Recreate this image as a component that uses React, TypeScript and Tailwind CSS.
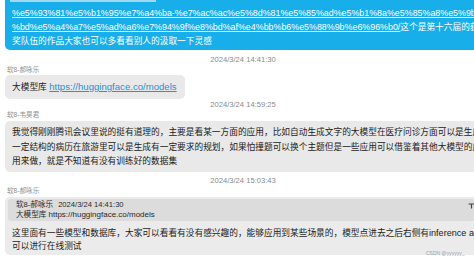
import React from "react";

const font = {
  fontFamily: '"Segoe UI", "Liberation Sans", "Noto Sans CJK SC", sans-serif',
};

function Stamp({ t }: { t: string }) {
  return (
    <div className="flex justify-center pl-[12px] text-[7.6px] leading-[10px] text-[#8a8a8a] whitespace-nowrap">
      {t}
    </div>
  );
}

function Sender({ n }: { n: string }) {
  return (
    <div className="pl-[7px] text-[6.6px] leading-[8px] text-[#8f8f8f] whitespace-nowrap">
      {n}
    </div>
  );
}

export default function App() {
  return (
    <div
      className="w-[474px] h-[260px] overflow-hidden bg-white relative"
      style={font}
    >
      {/* blue bubble */}
      <div className="relative ml-[5px] w-[520px] rounded-b-[5px] bg-[#17aeea] pt-[6px] pb-[2px] pl-[7px] text-[8.7px] leading-[14px] text-white whitespace-nowrap">
        <div className="absolute left-[5px] top-0 h-[2px] w-[146px] bg-[#9fd9f3]" />
        <div className="underline text-[8.9px]">
          %e5%93%81%e5%b1%95%e7%a4%ba-%e7%ac%ac%e5%8d%81%e5%85%ad%e5%b1%8a%e5%85%a8%e5%9b%bd
        </div>
        <div>
          <span className="underline text-[8.9px]">
            %bd%e5%a4%a7%e5%ad%a6%e7%94%9f%e8%bd%af%e4%bb%b6%e5%88%9b%e6%96%b0/
          </span>
          这个是第十六届的获
        </div>
        <div>奖队伍的作品大家也可以多看看别人的汲取一下灵感</div>
      </div>

      <div className="mt-[5px]">
        <Stamp t="2024/3/24 14:41:30" />
      </div>
      <div className="mt-[1px]">
        <Sender n="软8-郝咏乐" />
      </div>
      <div className="mt-[1px] ml-[5px] w-fit rounded-[5px] bg-[#e9e9e9] pl-[7px] pr-[8px] py-[5px] text-[8.7px] leading-[14px] text-[#1a1a1a] whitespace-nowrap">
        大模型库{" "}
        <span className="text-[9.6px] text-[#2b8fd8] underline">
          https://huggingface.co/models
        </span>
      </div>

      <div className="mt-[1px]">
        <Stamp t="2024/3/24 14:59:25" />
      </div>
      <div className="mt-[1px]">
        <Sender n="软8-韦昊君" />
      </div>
      <div className="mt-[2px] ml-[5px] w-[520px] rounded-[5px] bg-[#e9e9e9] pl-[7px] pt-[4px] pb-[3px] text-[8.7px] leading-[14.5px] text-[#1a1a1a] whitespace-nowrap">
        <div>
          我觉得刚刚腾讯会议里说的挺有道理的，主要是看某一方面的应用，比如自动生成文字的大模型在医疗问诊方面可以是生成
        </div>
        <div>
          一定结构的病历在旅游里可以是生成有一定要求的规划，如果怕撞题可以换个主题但是一些应用可以借鉴着其他大模型的应
        </div>
        <div>用来做，就是不知道有没有训练好的数据集</div>
      </div>

      <div className="mt-[4px]">
        <Stamp t="2024/3/24 15:03:43" />
      </div>
      <div className="mt-[1px]">
        <Sender n="软8-郝咏乐" />
      </div>
      <div className="mt-[2px] ml-[5px] w-[520px] rounded-[5px] bg-[#ebebeb] pt-[2px] pb-[1px] text-[#1a1a1a] whitespace-nowrap">
        <div className="relative ml-[3px] mr-[50px] rounded-[3px] bg-[#dcdcdc] pl-[8px] py-[1px] text-[7.6px] leading-[10px] text-[#2a2a2a]">
          <div>
            软8-郝咏乐<span className="ml-[5px]">2024/3/24 14:41:30</span>
          </div>
          <div>
            大模型库 <span className="text-[8px]">https://huggingface.co/models</span>
          </div>
          <svg
            className="absolute left-[460px] top-[4px]"
            width="7"
            height="6"
            viewBox="0 0 7 6"
          >
            <path d="M0.5 1 H6.5 M3.5 1 V5.5" stroke="#444" strokeWidth="1.2" fill="none" />
          </svg>
        </div>
        <div className="mt-[6px] pl-[7px] text-[8.7px] leading-[13.5px]">
          <div>
            这里面有一些模型和数据库，大家可以看看有没有感兴趣的，能够应用到某些场景的，模型点进去之后右侧有
            <span className="text-[9.1px]">inference api</span>
          </div>
          <div>可以进行在线测试</div>
        </div>
      </div>

      <div className="absolute left-[426px] top-[250px] text-[5px] leading-[6px] text-[#9aa3ad] whitespace-nowrap">
        CSDN @yyyyyy_
      </div>
    </div>
  );
}
